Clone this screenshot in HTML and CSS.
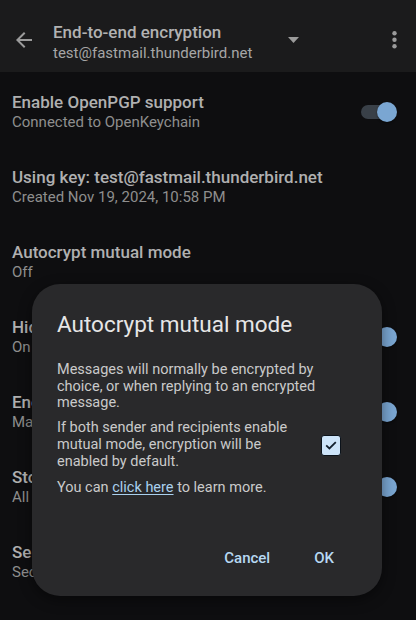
FILE: index.html
```html
<!DOCTYPE html>
<html lang="en">
<head>
<meta charset="utf-8">
<title>End-to-end encryption</title>
<link rel="stylesheet" href="styles.css">
</head>
<body>
<div class="screen">
  <header class="appbar">
    <svg class="icon-back" width="24" height="24" viewBox="0 0 24 24"><path d="M20 11H7.83l5.59-5.59L12 4l-8 8 8 8 1.41-1.41L7.83 13H20v-2z" fill="#9b9b9b"/></svg>
    <div class="appbar-titles">
      <div class="appbar-title">End-to-end encryption</div>
      <div class="appbar-sub">test@fastmail.thunderbird.net</div>
    </div>
    <svg class="icon-drop" width="11" height="6" viewBox="0 0 11 6"><polygon points="0,0 11,0 5.5,6" fill="#9b9b9b"/></svg>
    <svg class="icon-more" width="5" height="18" viewBox="0 0 5 18"><circle cx="2.5" cy="2.3" r="2.2" fill="#9b9b9b"/><circle cx="2.5" cy="8.8" r="2.2" fill="#9b9b9b"/><circle cx="2.5" cy="15.3" r="2.2" fill="#9b9b9b"/></svg>
  </header>

  <main class="list">
    <div class="row">
      <div class="row-text">
        <div class="row-title">Enable OpenPGP support</div>
        <div class="row-sub">Connected to OpenKeychain</div>
      </div>
      <div class="switch"><span class="track"></span><span class="thumb"></span></div>
    </div>
    <div class="row">
      <div class="row-text">
        <div class="row-title">Using key: test@fastmail.thunderbird.net</div>
        <div class="row-sub">Created Nov 19, 2024, 10:58 PM</div>
      </div>
    </div>
    <div class="row">
      <div class="row-text">
        <div class="row-title">Autocrypt mutual mode</div>
        <div class="row-sub">Off</div>
      </div>
    </div>
    <div class="row">
      <div class="row-text">
        <div class="row-title">Hide unencrypted subject</div>
        <div class="row-sub">On</div>
      </div>
      <div class="switch"><span class="track"></span><span class="thumb"></span></div>
    </div>
    <div class="row">
      <div class="row-text">
        <div class="row-title">Encrypt drafts</div>
        <div class="row-sub">Make drafts encrypted</div>
      </div>
      <div class="switch"><span class="track"></span><span class="thumb"></span></div>
    </div>
    <div class="row">
      <div class="row-text">
        <div class="row-title">Store drafts encrypted</div>
        <div class="row-sub">All drafts will be stored</div>
      </div>
      <div class="switch"><span class="track"></span><span class="thumb"></span></div>
    </div>
    <div class="row">
      <div class="row-text">
        <div class="row-title">Send Autocrypt Setup Message</div>
        <div class="row-sub">Securely transfer setup</div>
      </div>
    </div>
  </main>

  <div class="dialog" role="dialog">
    <h2 class="dialog-title">Autocrypt mutual mode</h2>
    <p class="dialog-p p1">Messages will normally be encrypted by choice, or when replying to an encrypted message.</p>
    <div class="check-row">
      <p class="dialog-p check-text">If both sender and recipients enable mutual mode, encryption will be enabled by default.</p>
      <div class="check-cell">
        <span class="checkbox"><svg width="12" height="9" viewBox="0 0 12 9"><path d="M1.2 4.4 L4.4 7.4 L10.8 1.2" fill="none" stroke="#13202e" stroke-width="1.8"/></svg></span>
      </div>
    </div>
    <p class="dialog-p p3">You can <a class="link" href="#">click here</a> to learn more.</p>
    <div class="actions">
      <button class="btn">Cancel</button>
      <button class="btn">OK</button>
    </div>
  </div>
</div>
</body>
</html>
```

FILE: styles.css
```css
* { box-sizing: border-box; }
html, body {
  margin: 0;
  padding: 0;
  background: #0e0e10;
}
body {
  font-family: Roboto, "Noto Sans", "Liberation Sans", sans-serif;
  width: 416px;
  height: 620px;
  overflow: hidden;
}
.screen {
  position: relative;
  width: 416px;
  height: 620px;
  background: #0e0e10;
}
.appbar {
  height: 72px;
  padding-top: 8px;
  background: #1b1b1c;
  display: flex;
  align-items: center;
  padding-left: 12px;
  padding-right: 19px;
}
.icon-back { flex: none; }
.appbar-titles {
  margin-left: 17px;
  margin-top: 3px;
  width: 235px;
}
.appbar-title {
  font-size: 17px;
  line-height: 22px;
  font-weight: 500;
  color: #b2b2b2;
  white-space: nowrap;
}
.appbar-sub {
  font-size: 15px;
  line-height: 20px;
  color: #a6a6a6;
  white-space: nowrap;
}
.icon-drop { flex: none; margin-left: 0; }
.icon-more { flex: none; margin-left: auto; }

.list { display: flex; flex-direction: column; }
.row {
  display: flex;
  align-items: center;
  height: 75px;
  padding: 20px 19px 15px 12px;
}
.row-text { flex: 1; min-width: 0; }
.row-title {
  font-size: 17px;
  line-height: 20px;
  font-weight: 500;
  color: #b0b0b0;
  white-space: nowrap;
}
.row-sub {
  font-size: 15px;
  line-height: 20px;
  color: #8e8e8e;
  white-space: nowrap;
}
.switch {
  position: relative;
  width: 36px;
  height: 20px;
  flex: none;
}
.track {
  position: absolute;
  left: 0;
  top: 3px;
  width: 33px;
  height: 14px;
  border-radius: 7px;
  background: #394048;
}
.thumb {
  position: absolute;
  right: 0;
  top: 0;
  width: 20px;
  height: 20px;
  border-radius: 50%;
  background: #7aa6d2;
  box-shadow: 0 1px 2px rgba(0,0,0,0.5);
}

.dialog {
  position: absolute;
  left: 32px;
  top: 284px;
  width: 350px;
  height: 312px;
  background: #29292b;
  border-radius: 28px;
  padding: 24px 26px 18px 25px;
  box-shadow: 0 4px 14px rgba(0,0,0,0.45);
  display: flex;
  flex-direction: column;
}
.dialog-title {
  margin: 0;
  font-size: 22.5px;
  line-height: 32px;
  font-weight: 400;
  color: #e6e6e6;
}
.dialog-p {
  margin: 0;
  font-size: 14.5px;
  line-height: 16.7px;
  color: #cacaca;
}
.p1 { margin-top: 22px; }
.check-row {
  margin-top: 8px;
  display: flex;
  align-items: center;
}
.check-text { flex: 1; }
.check-cell {
  width: 50px;
  flex: none;
  display: flex;
  justify-content: center;
  align-items: center;
}
.checkbox {
  width: 20px;
  height: 21px;
  border-radius: 3px;
  background: #cde4f9;
  border: 1.5px solid #0c131b;
  display: flex;
  align-items: center;
  justify-content: center;
}
.p3 { margin-top: 10px; }
.link {
  color: #a9d0ee;
  text-decoration: underline;
  text-underline-offset: 2px;
}
.actions {
  margin-top: auto;
  display: flex;
  justify-content: flex-end;
  gap: 20px;
  margin-right: 10px;
}
.btn {
  height: 40px;
  padding: 0 12px;
  border: none;
  background: transparent;
  font-family: Roboto, "Noto Sans", "Liberation Sans", sans-serif;
  font-size: 15px;
  line-height: 20px;
  font-weight: 500;
  color: #b7d9f3;
}
```
